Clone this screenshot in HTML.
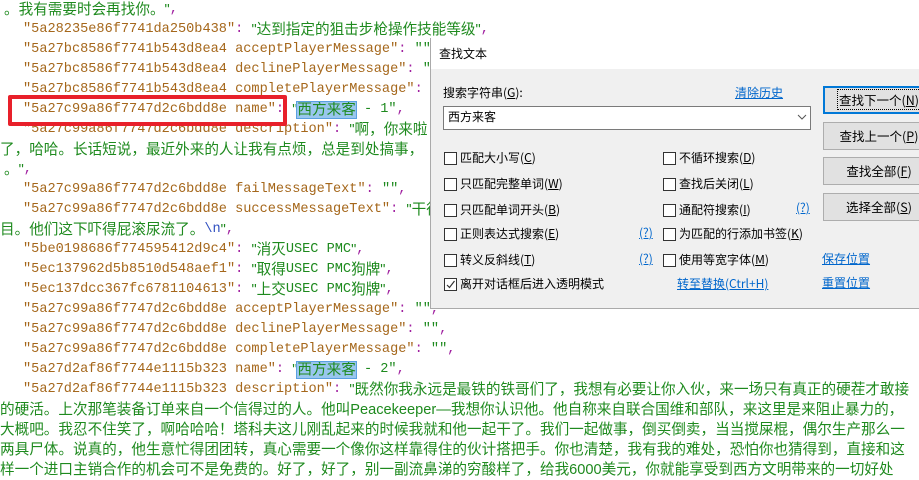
<!DOCTYPE html>
<html><head><meta charset="utf-8"><style>
body{margin:0;width:919px;height:478px;overflow:hidden;background:#fff;position:relative;font-family:"Liberation Mono","Noto Sans CJK SC",monospace;font-size:13.6px}
.code{position:absolute;left:0;top:0;width:919px}
.l{height:20px;line-height:20px;white-space:pre;overflow:hidden;color:#a5671b}
.i{padding-left:23px}
.l span{line-height:20px;vertical-align:top}
.s{color:#1e8a1e;font-family:"Liberation Sans","Noto Sans CJK SC",sans-serif;font-size:14.6px}
.m{font-family:"Liberation Mono","Noto Sans CJK SC",monospace;font-size:13.6px}
.p{color:#a020a0}
.hl{background:#99c6ee;outline:1px solid #5aa0e0}
.red{position:absolute;left:8px;top:95px;width:271px;height:23px;border:4px solid #e8202a;border-radius:2px}
.dlg{position:absolute;left:430px;top:38px;width:489px;height:270px;background:#f0f0f0;border-left:1px solid #aaa;border-bottom:1px solid #aaa;font-family:"Noto Sans CJK SC",sans-serif;font-size:12px;color:#000}
.tb{position:absolute;left:0;top:0;right:0;height:31px;background:#fff}
.a{position:absolute;white-space:nowrap;line-height:16px}
.cb{position:absolute;width:11px;height:11px;border:1px solid #333;background:#fff}
.lk{color:#0066cc;text-decoration:underline}
.btn{position:absolute;left:392px;width:110px;height:26px;background:#e1e1e1;border:1px solid #adadad;text-align:center;line-height:26px;font-size:12.5px}
</style></head><body>
<div class="code">
<div class="l" style="padding-left:4px"><span class="s">。我有需要时会再找你。"</span><span class="p">,</span></div>
<div class="l i">"5a28235e86f7741da250b438"<span class="p">: </span><span class="s">"达到指定的狙击步枪操作技能等级"</span><span class="p">,</span></div>
<div class="l i">"5a27bc8586f7741b543d8ea4 acceptPlayerMessage"<span class="p">: </span><span class="s m">""</span><span class="p">,</span></div>
<div class="l i">"5a27bc8586f7741b543d8ea4 declinePlayerMessage"<span class="p">: </span><span class="s m">""</span><span class="p">,</span></div>
<div class="l i">"5a27bc8586f7741b543d8ea4 completePlayerMessage"<span class="p">: </span><span class="s m">""</span><span class="p">,</span></div>
<div class="l i">"5a27c99a86f7747d2c6bdd8e name"<span class="p">: </span><span class="s">"<span class="hl">西方来客</span><span class="m"> - 1"</span></span><span class="p">,</span></div>
<div class="l i">"5a27c99a86f7747d2c6bdd8e description"<span class="p">: </span><span class="s">"啊，你来啦！</span></div>
<div class="l"><span class="s">了，哈哈。长话短说，最近外来的人让我有点烦，总是到处搞事，</span></div>
<div class="l" style="padding-left:4px"><span class="s">。"</span><span class="p">,</span></div>
<div class="l i">"5a27c99a86f7747d2c6bdd8e failMessageText"<span class="p">: </span><span class="s m">""</span><span class="p">,</span></div>
<div class="l i">"5a27c99a86f7747d2c6bdd8e successMessageText"<span class="p">: </span><span class="s">"干得好</span></div>
<div class="l"><span class="s">目。他们这下吓得屁滚尿流了。<span class="m" style="color:#3050c0">\n</span>"</span><span class="p">,</span></div>
<div class="l i">"5be0198686f774595412d9c4"<span class="p">: </span><span class="s">"消灭<span class="m">USEC PMC</span>"</span><span class="p">,</span></div>
<div class="l i">"5ec137962d5b8510d548aef1"<span class="p">: </span><span class="s">"取得<span class="m">USEC PMC</span>狗牌"</span><span class="p">,</span></div>
<div class="l i">"5ec137dcc367fc6781104613"<span class="p">: </span><span class="s">"上交<span class="m">USEC PMC</span>狗牌"</span><span class="p">,</span></div>
<div class="l i">"5a27c99a86f7747d2c6bdd8e acceptPlayerMessage"<span class="p">: </span><span class="s m">""</span><span class="p">,</span></div>
<div class="l i">"5a27c99a86f7747d2c6bdd8e declinePlayerMessage"<span class="p">: </span><span class="s m">""</span><span class="p">,</span></div>
<div class="l i">"5a27c99a86f7747d2c6bdd8e completePlayerMessage"<span class="p">: </span><span class="s m">""</span><span class="p">,</span></div>
<div class="l i">"5a27d2af86f7744e1115b323 name"<span class="p">: </span><span class="s">"<span class="hl">西方来客</span><span class="m"> - 2"</span></span><span class="p">,</span></div>
<div class="l i">"5a27d2af86f7744e1115b323 description"<span class="p">: </span><span class="s">"既然你我永远是最铁的铁哥们了，我想有必要让你入伙，来一场只有真正的硬茬才敢接</span></div>
<div class="l"><span class="s">的硬活。上次那笔装备订单来自一个信得过的人。他叫Peacekeeper—我想你认识他。他自称来自联合国维和部队，来这里是来阻止暴力的，</span></div>
<div class="l"><span class="s">大概吧。我忍不住笑了，啊哈哈哈！塔科夫这儿刚乱起来的时候我就和他一起干了。我们一起做事，倒买倒卖，当当搅屎棍，偶尔生产那么一</span></div>
<div class="l"><span class="s">两具尸体。说真的，他生意忙得团团转，真心需要一个像你这样靠得住的伙计搭把手。你也清楚，我有我的难处，恐怕你也猜得到，直接和这</span></div>
<div class="l"><span class="s">样一个进口主销合作的机会可不是免费的。好了，好了，别一副流鼻涕的穷酸样了，给我6000美元，你就能享受到西方文明带来的一切好处</span></div>
</div>
<div class="red"></div>
<div class="dlg">
<div class="tb"><div class="a" style="left:8px;top:8px">查找文本</div></div>
<div class="a" style="left:12px;top:47px">搜索字符串(<u>G</u>):</div>
<div class="a lk" style="left:304px;top:47px">清除历史</div>
<div style="position:absolute;left:12px;top:68px;width:366px;height:22px;background:#fff;border:1px solid #7a7a7a"></div>
<div class="a" style="left:17px;top:71px">西方来客</div>
<svg style="position:absolute;left:366px;top:76px" width="10" height="6"><path d="M1 1L5 5L9 1" fill="none" stroke="#555" stroke-width="1"/></svg>
<div class="btn" style="top:48px;border:2px solid #0078d7;height:24px;line-height:24px;width:108px"><span style="outline:1px dotted #000;padding:0 1px">查找下一个(<u>N</u>)</span></div>
<div class="btn" style="top:84px">查找上一个(<u>P</u>)</div>
<div class="btn" style="top:119px">查找全部(<u>F</u>)</div>
<div class="btn" style="top:155px">选择全部(<u>S</u>)</div>

<div class="cb" style="left:13px;top:114px"></div><div class="a" style="left:29px;top:112px">匹配大小写(<u>C</u>)</div>
<div class="cb" style="left:13px;top:140px"></div><div class="a" style="left:29px;top:138px">只匹配完整单词(<u>W</u>)</div>
<div class="cb" style="left:13px;top:166px"></div><div class="a" style="left:29px;top:164px">只匹配单词开头(<u>B</u>)</div>
<div class="cb" style="left:13px;top:190px"></div><div class="a" style="left:29px;top:188px">正则表达式搜索(<u>E</u>)</div>
<div class="cb" style="left:13px;top:216px"></div><div class="a" style="left:29px;top:214px">转义反斜线(<u>T</u>)</div>
<div class="cb" style="left:13px;top:240px"></div><div class="a" style="left:29px;top:238px">离开对话框后进入透明模式</div>
<svg style="position:absolute;left:14px;top:241px" width="11" height="11"><path d="M2 6L4.5 8.5L9.5 2" fill="none" stroke="#333" stroke-width="1.2"/></svg>
<div class="a lk" style="left:208px;top:187px">(?)</div>
<div class="a lk" style="left:208px;top:213px">(?)</div>

<div class="cb" style="left:232px;top:114px"></div><div class="a" style="left:248px;top:112px">不循环搜索(<u>D</u>)</div>
<div class="cb" style="left:232px;top:140px"></div><div class="a" style="left:248px;top:138px">查找后关闭(<u>L</u>)</div>
<div class="cb" style="left:232px;top:166px"></div><div class="a" style="left:248px;top:164px">通配符搜索(<u>I</u>)</div>
<div class="cb" style="left:232px;top:190px"></div><div class="a" style="left:248px;top:188px">为匹配的行添加书签(<u>K</u>)</div>
<div class="cb" style="left:232px;top:216px"></div><div class="a" style="left:248px;top:214px">使用等宽字体(<u>M</u>)</div>
<div class="a lk" style="left:365px;top:162px">(?)</div>
<div class="a lk" style="left:246px;top:238px">转至替换(Ctrl+H)</div>
<div class="a lk" style="left:391px;top:213px">保存位置</div>
<div class="a lk" style="left:391px;top:237px">重置位置</div>
</div>
</body></html>
